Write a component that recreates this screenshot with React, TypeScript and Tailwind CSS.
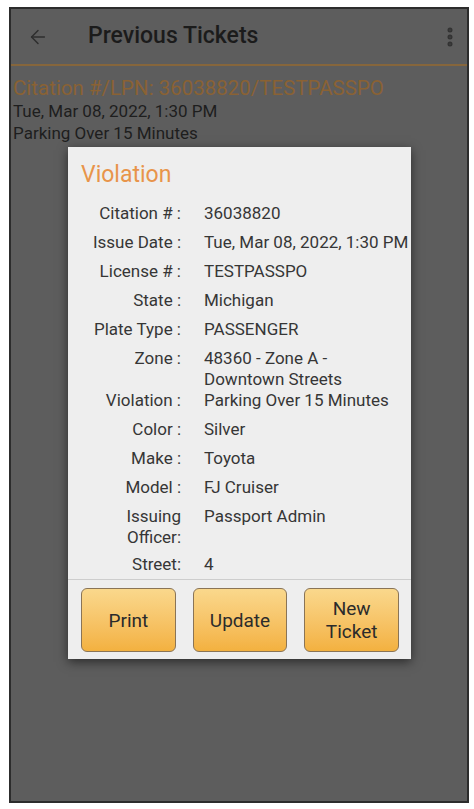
import React from 'react';
import { ArrowLeft, EllipsisVertical } from 'lucide-react';

type Row = { label: string[]; value: string[]; pad: string };

const rows: Row[] = [
  { label: ['Citation # :'], value: ['36038820'], pad: 'py-[4px]' },
  { label: ['Issue Date :'], value: ['Tue, Mar 08, 2022, 1:30 PM'], pad: 'py-[4px]' },
  { label: ['License # :'], value: ['TESTPASSPO'], pad: 'py-[4px]' },
  { label: ['State :'], value: ['Michigan'], pad: 'py-[4px]' },
  { label: ['Plate Type :'], value: ['PASSENGER'], pad: 'py-[4px]' },
  { label: ['Zone :'], value: ['48360 - Zone A -', 'Downtown Streets'], pad: 'pt-[4px] mb-[-3px]' },
  { label: ['Violation :'], value: ['Parking Over 15 Minutes'], pad: 'py-[4px]' },
  { label: ['Color :'], value: ['Silver'], pad: 'py-[4px]' },
  { label: ['Make :'], value: ['Toyota'], pad: 'py-[4px]' },
  { label: ['Model :'], value: ['FJ Cruiser'], pad: 'py-[4px]' },
  { label: ['Issuing', 'Officer:'], value: ['Passport Admin'], pad: 'pt-[4px] pb-[2px]' },
  { label: ['Street:'], value: ['4'], pad: 'py-[4px]' },
];

const ActionButton = ({ lines }: { lines: string[] }) => (
  <button className="flex-1 h-[64px] rounded-[6px] border-[1.5px] border-[#8a7456] bg-gradient-to-b from-[#fad88c] to-[#f3b13f] text-[19px] leading-[23px] text-[#2b2b2b] flex flex-col items-center justify-center">
    {lines.map((l) => (
      <span key={l}>{l}</span>
    ))}
  </button>
);

export default function App() {
  return (
    <div className="min-h-screen bg-white pt-[7px] pl-[9px]" style={{ fontFamily: 'Roboto, "Noto Sans", sans-serif' }}>
      <div className="relative w-[460px] h-[796px] border-2 border-[#2c2c2c] bg-[#5d5d5d] overflow-hidden">
        {/* Dimmed app bar */}
        <div className="h-[57px] flex items-center px-[16px] border-b-2 border-[#86663c]">
          <ArrowLeft className="w-[22px] h-[22px] text-[#2e2e2e]" strokeWidth={1.6} />
          <h1 className="ml-[39px] text-[23px] font-medium text-[#1b1b1b]">Previous Tickets</h1>
          <EllipsisVertical className="ml-auto mr-[-11px] w-[24px] h-[24px] text-[#333333]" strokeWidth={3} />
        </div>

        {/* Dimmed list item */}
        <div className="pl-[2px] pt-[10px]">
          <p className="text-[20.5px] leading-[24px] text-[#8a6234]">Citation #/LPN: 36038820/TESTPASSPO</p>
          <p className="text-[17px] leading-[22px] text-[#1e1e1e]">Tue, Mar 08, 2022, 1:30 PM</p>
          <p className="text-[17px] leading-[22px] text-[#1e1e1e]">Parking Over 15 Minutes</p>
        </div>

        {/* Dialog */}
        <div className="absolute left-[57px] top-[138px] w-[343px] h-[512px] bg-[#eeeeee] shadow-[0_3px_10px_rgba(0,0,0,0.55)] flex flex-col">
          <h2 className="px-[13px] pt-[14px] text-[23px] leading-[28px] text-[#e8944a]">Violation</h2>
          <div className="pt-[10px] flex-1">
            {rows.map((r) => (
              <div key={r.label.join()} className={`flex ${r.pad} text-[17px] text-[#363636]`}>
                <div className="w-[113px] shrink-0 text-right leading-[21px] whitespace-nowrap">
                  {r.label.map((l) => (
                    <div key={l}>{l}</div>
                  ))}
                </div>
                <div className="pl-[23px] leading-[20.5px] whitespace-nowrap">
                  {r.value.map((v) => (
                    <div key={v}>{v}</div>
                  ))}
                </div>
              </div>
            ))}
          </div>
          <div className="border-t border-[#cdcdcd] flex gap-[17px] pl-[13px] pr-[12px] pt-[8px] pb-[8px]">
            <ActionButton lines={['Print']} />
            <ActionButton lines={['Update']} />
            <ActionButton lines={['New', 'Ticket']} />
          </div>
        </div>
      </div>
    </div>
  );
}
